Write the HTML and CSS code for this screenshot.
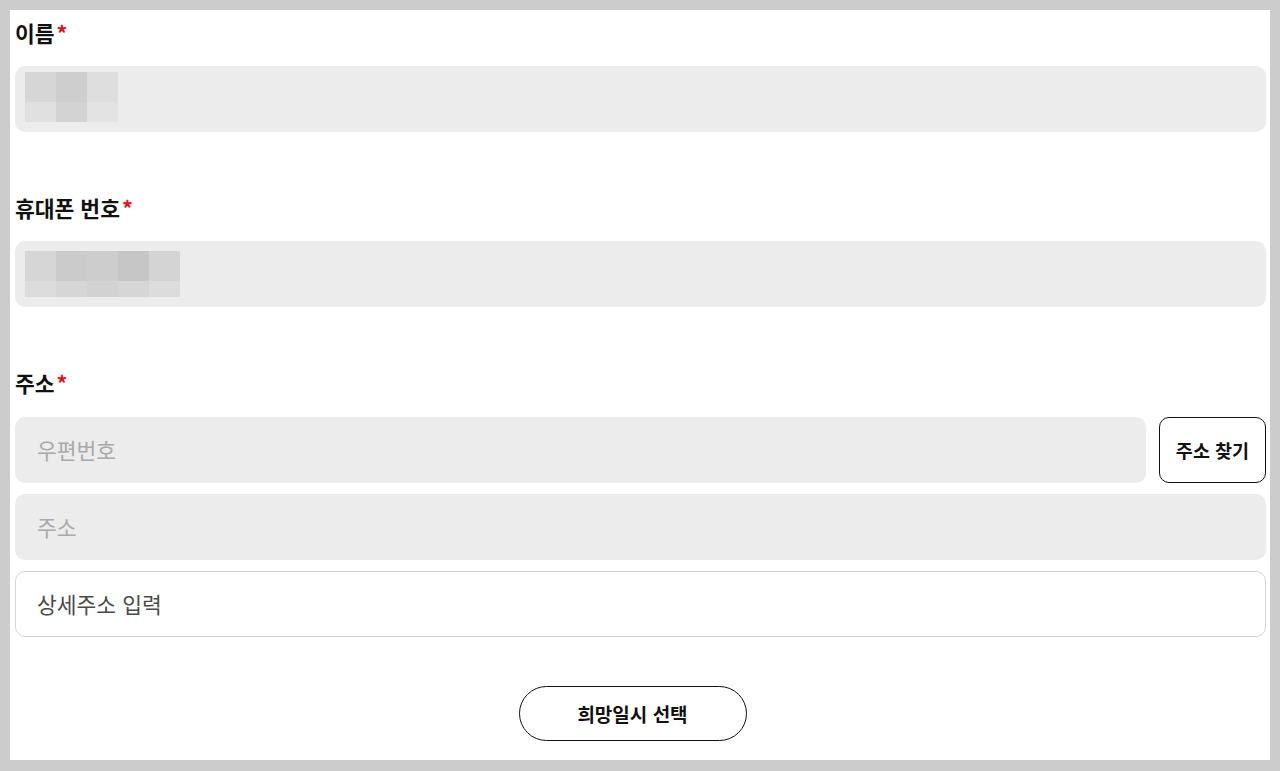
FILE: index.html
```html
<!DOCTYPE html>
<html lang="ko">
<head>
<meta charset="utf-8">
<link rel="stylesheet" href="styles.css">
</head>
<body>
<div class="frame">
  <form class="form">
    <div class="field">
      <div class="label">이름<span class="req">*</span></div>
      <div class="input filled">
        <div class="mosaic">
          <div class="row top"><i class="c1"></i><i class="c2"></i><i class="c3"></i></div>
          <div class="row bottom"><i class="c4"></i><i class="c5"></i><i class="c6"></i></div>
        </div>
      </div>
    </div>
    <div class="field">
      <div class="label">휴대폰 번호<span class="req">*</span></div>
      <div class="input filled phone">
        <div class="mosaic">
          <div class="row top"><i class="p1"></i><i class="p2"></i><i class="p3"></i><i class="p4"></i><i class="p5"></i></div>
          <div class="row bottom short"><i class="q1"></i><i class="q2"></i><i class="q3"></i><i class="q4"></i><i class="q5"></i></div>
        </div>
      </div>
    </div>
    <div class="field address">
      <div class="label">주소<span class="req">*</span></div>
      <div class="addr-rows">
        <div class="zip-row">
          <div class="input placeholder grow">우편번호</div>
          <button type="button" class="find-btn">주소 찾기</button>
        </div>
        <div class="input placeholder">주소</div>
        <div class="input detail">상세주소 입력</div>
      </div>
    </div>
    <div class="actions">
      <button type="button" class="pill-btn">희망일시 선택</button>
    </div>
  </form>
</div>
</body>
</html>
```
FILE: styles.css
```css
* { box-sizing: border-box; }
html, body { margin: 0; padding: 0; }
body {
  background: #cccccc;
  padding: 10px;
  font-family: "Noto Sans CJK KR", "Noto Sans", sans-serif;
  height: 771px;
}
.frame {
  background: #ffffff;
  width: 1260px;
  height: 750px;
  padding: 8px 4px 20px 5px;
}
.form { display: flex; flex-direction: column; }
.field { display: flex; flex-direction: column; gap: 18px; margin-bottom: 61px; }
.field.address { margin-bottom: 49px; }
.label {
  font-size: 21.5px;
  line-height: 30px;
  height: 30px;
  font-weight: 700;
  color: #111;
}
.req { color: #e0141e; margin-left: 2px; }
.input {
  height: 66px;
  border-radius: 10px;
  background: #ececec;
  display: flex;
  align-items: center;
  padding: 0 22px;
  font-size: 21.5px;
  line-height: 30px;
}
.input.filled { padding: 0 10px 4px; }
.input.filled.phone { padding: 0 10px 1px; }
.input.placeholder { color: #a9a9a9; }
.input.detail {
  background: #ffffff;
  border: 1px solid #d6d6d6;
  color: #4a4a4a;
  padding: 0 21px;
}
.mosaic { display: flex; flex-direction: column; }
.mosaic .row { display: flex; }
.mosaic .row.top { height: 30px; }
.mosaic .row.bottom { height: 20px; }
.mosaic .row.bottom.short { height: 16px; }
.mosaic i { display: block; width: 31px; }
.c1 { background: #d6d6d6; } .c2 { background: #cecece; } .c3 { background: #dedede; }
.c4 { background: #e0e0e0; } .c5 { background: #d3d3d3; } .c6 { background: #e3e3e3; }
.p1 { background: #d6d6d6; } .p2 { background: #cbcbcb; } .p3 { background: #cdcdcd; } .p4 { background: #c6c6c6; } .p5 { background: #d4d4d4; }
.q1 { background: #dcdcdc; } .q2 { background: #d6d6d6; } .q3 { background: #d2d2d2; } .q4 { background: #d6d6d6; } .q5 { background: #dcdcdc; }
.addr-rows { display: flex; flex-direction: column; gap: 11px; margin-top: 1px; }
.zip-row { display: flex; gap: 13px; }
.grow { flex: 1; }
.find-btn {
  width: 107px;
  height: 66px;
  border: 1px solid #111;
  border-radius: 10px;
  background: #fff;
  font-family: inherit;
  font-size: 18.5px;
  font-weight: 700;
  color: #111;
  padding: 0;
}
.actions { display: flex; justify-content: center; }
.pill-btn {
  width: 228px;
  height: 55px;
  border: 1px solid #111;
  border-radius: 28px;
  background: #fff;
  font-family: inherit;
  font-size: 19px;
  font-weight: 700;
  color: #111;
  padding: 0;
  margin-right: 16px;
}
```
